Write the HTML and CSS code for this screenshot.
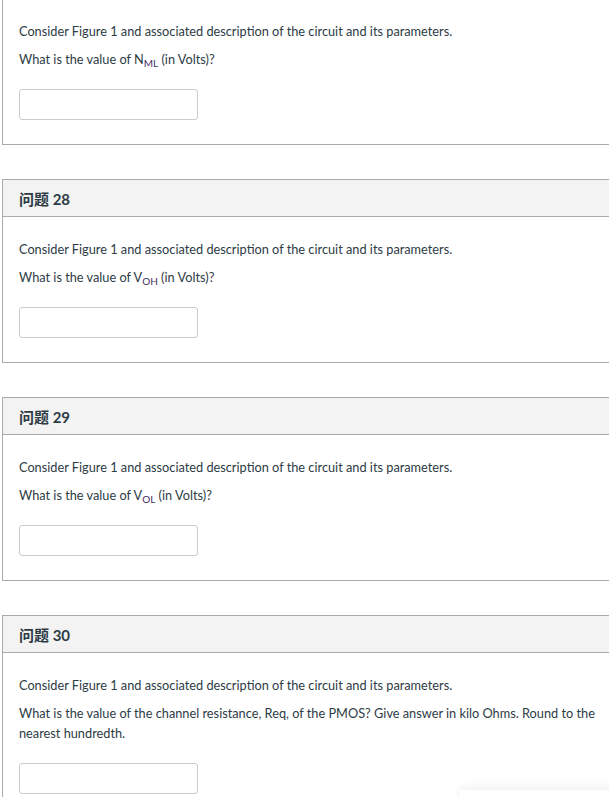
FILE: index.html
```html
<!DOCTYPE html>
<html lang="zh">
<head>
<meta charset="utf-8">
<link rel="stylesheet" href="styles.css">
</head>
<body>
<div class="page">
  <section class="card card-partial">
    <div class="card-body">
      <p>Consider Figure 1 and associated description of the circuit and its parameters.</p>
      <p>What is the value of N<sub>ML</sub> (in Volts)?</p>
      <div class="answer"><input class="answer-input" type="text"></div>
    </div>
  </section>

  <section class="card">
    <header class="card-header">问题 28</header>
    <div class="card-body">
      <p>Consider Figure 1 and associated description of the circuit and its parameters.</p>
      <p>What is the value of V<sub>OH</sub> (in Volts)?</p>
      <div class="answer"><input class="answer-input" type="text"></div>
    </div>
  </section>

  <section class="card">
    <header class="card-header">问题 29</header>
    <div class="card-body">
      <p>Consider Figure 1 and associated description of the circuit and its parameters.</p>
      <p>What is the value of V<sub>OL</sub> (in Volts)?</p>
      <div class="answer"><input class="answer-input" type="text"></div>
    </div>
  </section>

  <section class="card">
    <header class="card-header">问题 30</header>
    <div class="card-body">
      <p>Consider Figure 1 and associated description of the circuit and its parameters.</p>
      <p>What is the value of the channel resistance, Req, of the PMOS? Give answer in kilo Ohms. Round to the nearest hundredth.</p>
      <div class="answer"><input class="answer-input" type="text"></div>
    </div>
  </section>
</div>
<div class="floating-shadow"></div>
</body>
</html>
```

FILE: styles.css
```css
html, body {
  margin: 0;
  padding: 0;
  background: #fff;
  overflow: hidden;
}
body {
  font-family: Lato, "Noto Sans CJK SC", sans-serif;
  color: #2d3b45;
  font-size: 12.75px;
  width: 609px;
  height: 797px;
  position: relative;
}
.page {
  display: flex;
  flex-direction: column;
  gap: 34px;
  margin-left: 2px;
  margin-top: -2px;
  width: 650px;
}
.card {
  border: 1px solid #aaaaaa;
  background: #fff;
}
.card-header {
  background: #f3f3f3;
  border-bottom: 1px solid #aaaaaa;
  height: 36px;
  padding-left: 16px;
  display: flex;
  align-items: center;
  font-weight: bold;
  font-size: 15px;
  color: #2d3b45;
}
.card-body {
  padding: 22px 16px 24px 16px;
}
.card-body p {
  margin: 0 0 8px 0;
  line-height: 20px;
  width: 585px;
}
sub {
  font-size: 10px;
  vertical-align: -3px;
  line-height: 0;
  color: #3f3060;
}
.answer {
  padding-top: 12px;
}
.answer-input {
  display: block;
  box-sizing: border-box;
  width: 179px;
  height: 31px;
  border: 1px solid #c7cdd1;
  border-radius: 3px;
  background: #fff;
  margin: 0;
  padding: 0 8px;
}
.floating-shadow {
  position: absolute;
  left: 460px;
  top: 790px;
  width: 200px;
  height: 40px;
  background: #fff;
  box-shadow: 0 -3px 10px rgba(0,0,0,0.06);
}
```
